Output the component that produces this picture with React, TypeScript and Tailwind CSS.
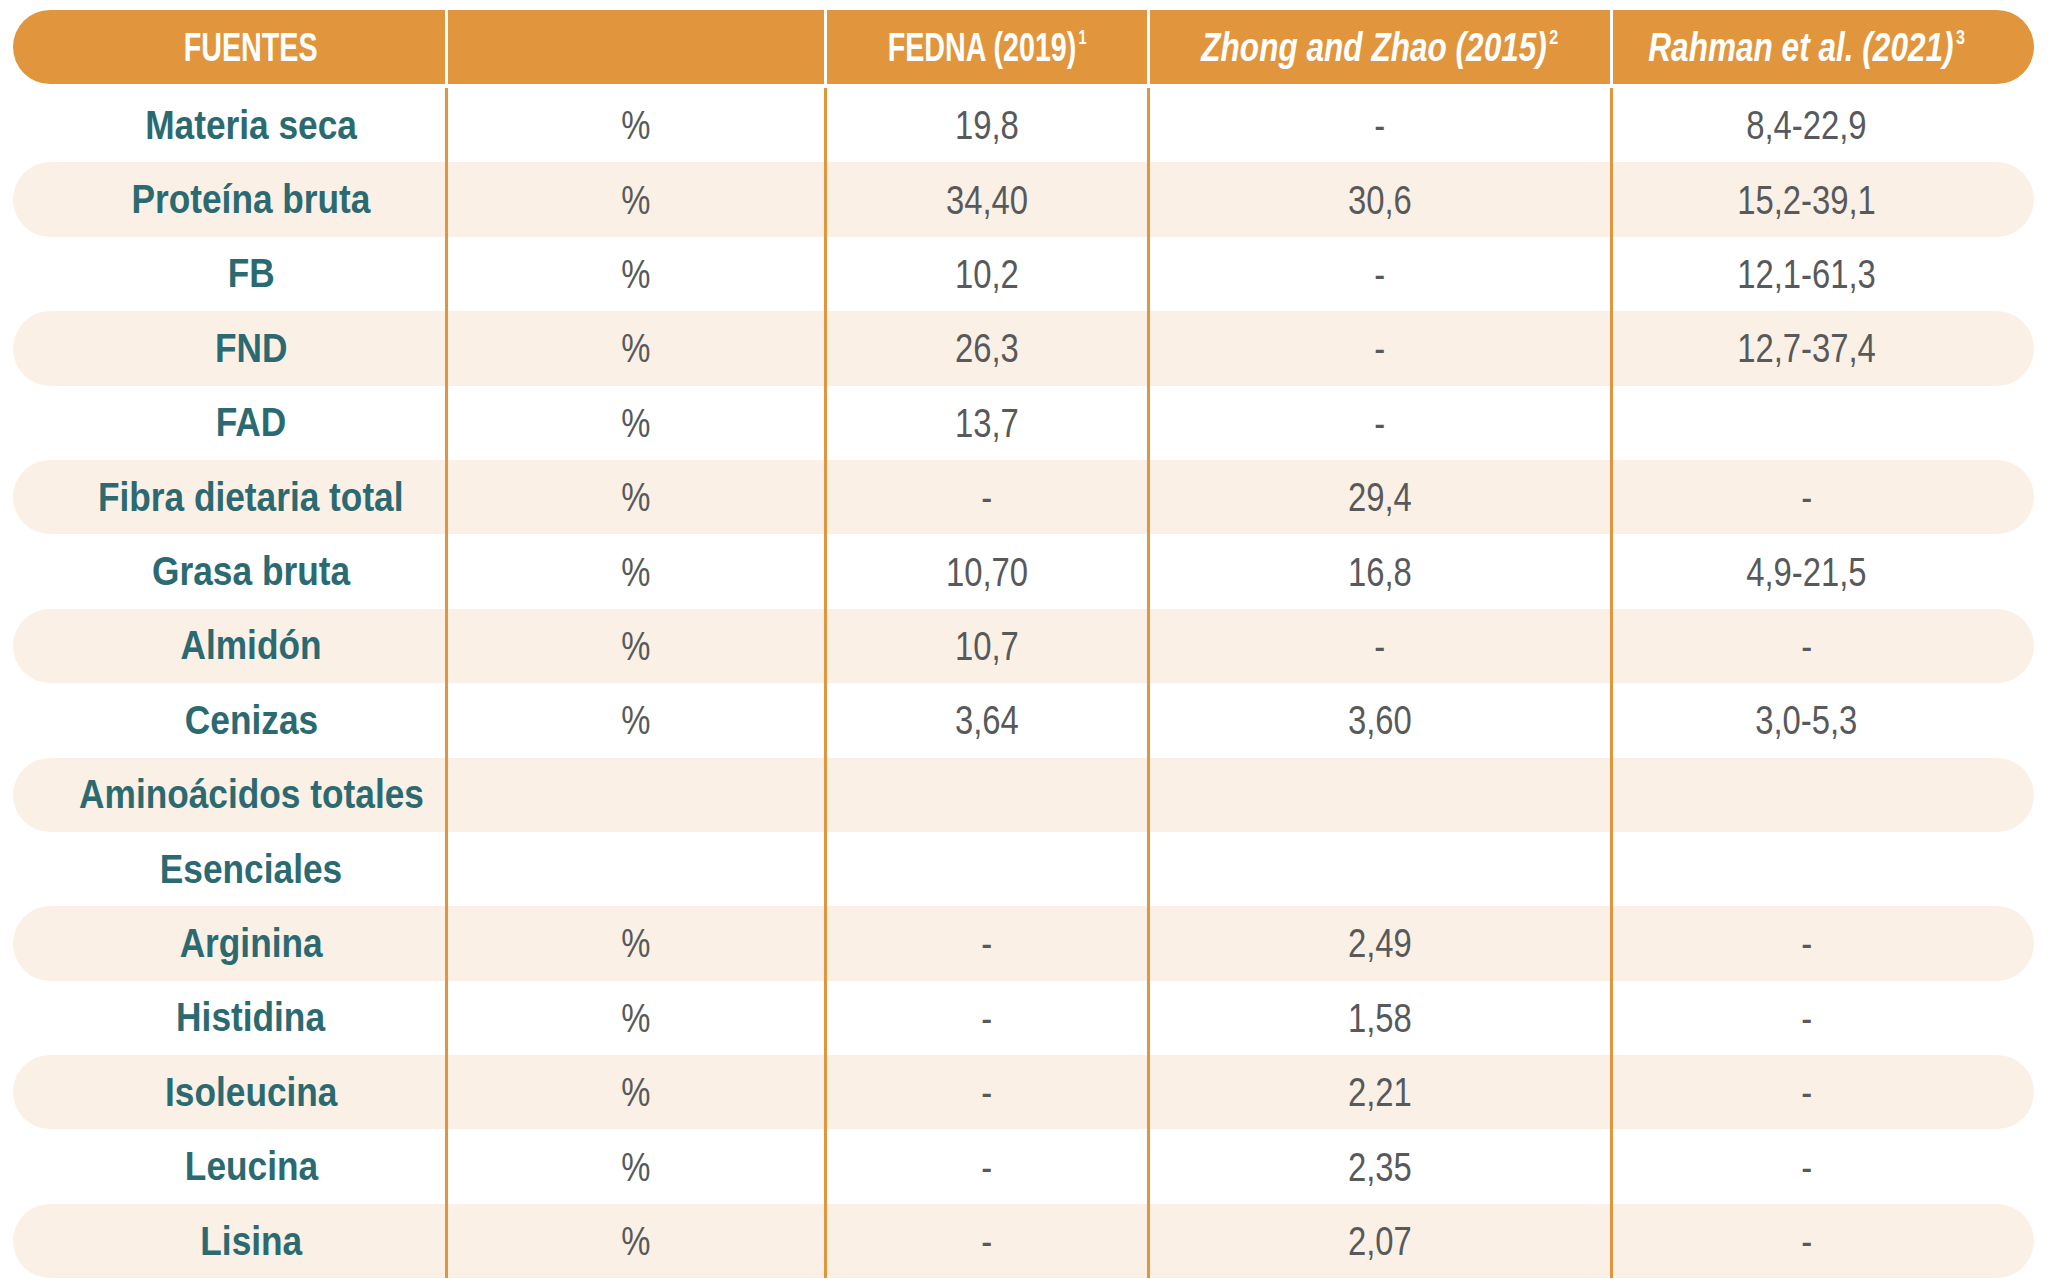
import React from 'react';

type Row = {
  label: string;
  unit?: string;
  fedna?: string;
  zhong?: string;
  rahman?: string;
};

const rows: Row[] = [
  { label: 'Materia seca', unit: '%', fedna: '19,8', zhong: '-', rahman: '8,4-22,9' },
  { label: 'Proteína bruta', unit: '%', fedna: '34,40', zhong: '30,6', rahman: '15,2-39,1' },
  { label: 'FB', unit: '%', fedna: '10,2', zhong: '-', rahman: '12,1-61,3' },
  { label: 'FND', unit: '%', fedna: '26,3', zhong: '-', rahman: '12,7-37,4' },
  { label: 'FAD', unit: '%', fedna: '13,7', zhong: '-', rahman: '' },
  { label: 'Fibra dietaria total', unit: '%', fedna: '-', zhong: '29,4', rahman: '-' },
  { label: 'Grasa bruta', unit: '%', fedna: '10,70', zhong: '16,8', rahman: '4,9-21,5' },
  { label: 'Almidón', unit: '%', fedna: '10,7', zhong: '-', rahman: '-' },
  { label: 'Cenizas', unit: '%', fedna: '3,64', zhong: '3,60', rahman: '3,0-5,3' },
  { label: 'Aminoácidos totales' },
  { label: 'Esenciales' },
  { label: 'Arginina', unit: '%', fedna: '-', zhong: '2,49', rahman: '-' },
  { label: 'Histidina', unit: '%', fedna: '-', zhong: '1,58', rahman: '-' },
  { label: 'Isoleucina', unit: '%', fedna: '-', zhong: '2,21', rahman: '-' },
  { label: 'Leucina', unit: '%', fedna: '-', zhong: '2,35', rahman: '-' },
  { label: 'Lisina', unit: '%', fedna: '-', zhong: '2,07', rahman: '-' },
];

// no condensed face installed, so text is narrowed with scale-x
function Val({ v }: { v?: string }) {
  return <span className="inline-block scale-x-[0.82] whitespace-nowrap">{v}</span>;
}

function Sup({ n }: { n: string }) {
  return <sup className="relative -top-[17px] ml-[3px] text-[21px] not-italic">{n}</sup>;
}

export default function App() {
  return (
    <div className='min-h-screen bg-white pl-[13px] pr-[14px] pt-[10px] font-["Liberation_Sans",Arial,sans-serif]'>
      <div className="flex h-[74px] items-center rounded-full bg-[#e1963d] text-[41px] font-bold leading-none text-white">
        <div className="flex h-full w-[432px] shrink-0 items-center justify-center pl-[44px]">
          <span className="inline-block scale-x-[0.7]">FUENTES</span>
        </div>
        <div className="h-full w-[379px] shrink-0 border-l-[3px] border-white" />
        <div className="flex h-full w-[323px] shrink-0 items-center justify-center border-l-[3px] border-white">
          <span className="inline-block scale-x-[0.7] whitespace-nowrap">
            FEDNA (2019)
            <Sup n="1" />
          </span>
        </div>
        <div className="flex h-full w-[463px] shrink-0 items-center justify-center overflow-visible border-l-[3px] border-white italic">
          <span className="inline-block scale-x-[0.77] whitespace-nowrap">
            Zhong and Zhao (2015)
            <Sup n="2" />
          </span>
        </div>
        <div className="flex h-full min-w-0 flex-1 items-center justify-center border-l-[3px] border-white pr-[34px] italic">
          <span className="inline-block scale-x-[0.77] whitespace-nowrap">
            Rahman et al. (2021)
            <Sup n="3" />
          </span>
        </div>
      </div>

      <div className="mt-[4px]">
        {rows.map((r, i) => (
          <div
            key={r.label}
            className={`flex h-[74.4px] items-center leading-none ${
              i % 2 === 1 ? 'rounded-full bg-[#fbf0e6]' : ''
            }`}
          >
            <div className="flex h-full w-[432px] shrink-0 items-center justify-center pl-[44px] text-[41px] font-bold text-[#2b6a70]">
              <span className="inline-block scale-x-[0.86] whitespace-nowrap">{r.label}</span>
            </div>
            <div className="flex h-full w-[379px] shrink-0 items-center justify-center border-l-[3px] border-[#e1963d] text-[40px] text-[#58595b]">
              <Val v={r.unit} />
            </div>
            <div className="flex h-full w-[323px] shrink-0 items-center justify-center border-l-[3px] border-[#e1963d] text-[40px] text-[#58595b]">
              <Val v={r.fedna} />
            </div>
            <div className="flex h-full w-[463px] shrink-0 items-center justify-center border-l-[3px] border-[#e1963d] text-[40px] text-[#58595b]">
              <Val v={r.zhong} />
            </div>
            <div className="flex h-full min-w-0 flex-1 items-center justify-center border-l-[3px] border-[#e1963d] pr-[34px] text-[40px] text-[#58595b]">
              <Val v={r.rahman} />
            </div>
          </div>
        ))}
      </div>
    </div>
  );
}
